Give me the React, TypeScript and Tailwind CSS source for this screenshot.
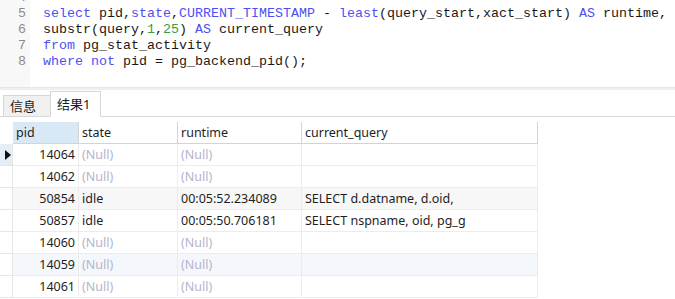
import React from "react";

const K = ({ c }: { c: string }) => <span className="text-[#4f4ff0]">{c}</span>;
const N = ({ c }: { c: string }) => <span className="text-[#3f9a3f]">{c}</span>;

const lines: { n: number; body: React.ReactNode }[] = [
  { n: 4, body: <span>&nbsp;</span> },
  {
    n: 5,
    body: (
      <>
        <K c="select" /> pid,<K c="state" />,<K c="CURRENT_TIMESTAMP" /> - <K c="least" />(query_start,xact_start) <K c="AS" /> runtime,
      </>
    ),
  },
  {
    n: 6,
    body: (
      <>
        substr(query,<N c="1" />,<N c="25" />) <K c="AS" /> current_query
      </>
    ),
  },
  {
    n: 7,
    body: (
      <>
        <K c="from" /> pg_stat_activity
      </>
    ),
  },
  {
    n: 8,
    body: (
      <>
        <K c="where" /> <K c="not" /> pid = pg_backend_pid();
      </>
    ),
  },
];

type Row = { pid: string; state: string | null; runtime: string | null; q: string; bg: string };
const rows: Row[] = [
  { pid: "14064", state: null, runtime: null, q: "", bg: "bg-white" },
  { pid: "14062", state: null, runtime: null, q: "", bg: "bg-white" },
  { pid: "50854", state: "idle", runtime: "00:05:52.234089", q: "SELECT d.datname, d.oid,", bg: "bg-[#f7f7f7]" },
  { pid: "50857", state: "idle", runtime: "00:05:50.706181", q: "SELECT nspname, oid, pg_g", bg: "bg-white" },
  { pid: "14060", state: null, runtime: null, q: "", bg: "bg-white" },
  { pid: "14059", state: null, runtime: null, q: "", bg: "bg-[#f4f8fc]" },
  { pid: "14061", state: null, runtime: null, q: "", bg: "bg-white" },
];

const Null = () => <span className="text-[#b4b4cc]">(Null)</span>;

export default function App() {
  return (
    <div className="w-[675px] h-[299px] overflow-hidden bg-white">
      {/* editor */}
      <div className="h-[88px] overflow-hidden flex border-b border-[#e6e6e6]">
        <div className="w-[30px] bg-[#f8f8f8] flex flex-col -mt-[10px]">
          {lines.map((l) => (
            <div
              key={l.n}
              className="h-[16px] leading-[16px] text-right pr-[4px] text-[#8c8c8c] text-[13.33px]"
              style={{ fontFamily: '"Liberation Mono", monospace' }}
            >
              {l.n}
            </div>
          ))}
        </div>
        <div className="flex-1 flex flex-col -mt-[10px] pl-[13px]">
          {lines.map((l) => (
            <div
              key={l.n}
              className="h-[16px] leading-[16px] whitespace-pre text-[13.33px] text-[#1a1a1a]"
              style={{ fontFamily: '"Liberation Mono", monospace' }}
            >
              {l.body}
            </div>
          ))}
        </div>
      </div>
      {/* splitter */}
      <div className="h-[2px] bg-[#efefef]" />
      {/* tabs */}
      <div
        className="h-[27px] flex items-end pl-[3px] border-b border-[#d6d6d6] bg-white"
        style={{ fontFamily: '"Noto Sans", "Noto Sans CJK SC", sans-serif' }}
      >
        <div className="h-[22px] w-[47px] -mb-px bg-[#f0f0f0] border border-[#d6d6d6] border-r-0 text-[13px] leading-[21px] pl-[6px] text-[#1a1a1a]">
          信息
        </div>
        <div className="h-[26px] w-[51px] -mb-px bg-white border border-[#d6d6d6] border-b-white text-[13px] leading-[24px] pl-[6px] text-[#1a1a1a]">
          结果1
        </div>
      </div>
      <div className="h-[5px]" />
      {/* grid */}
      <div
        className="text-[12.5px] text-[#1e1e1e]"
        style={{ fontFamily: '"Noto Sans", "Noto Sans CJK SC", sans-serif' }}
      >
        <div className="grid grid-cols-[13px_66px_99px_124px_236px] h-[22px]">
          <div className="bg-white" />
          <div className="bg-[#d9e8f6] border-r border-b border-[#d4d4d4] pl-[3px] leading-[21px]">pid</div>
          <div className="border-r border-b border-[#d4d4d4] pl-[3px] leading-[21px]">state</div>
          <div className="border-r border-b border-[#d4d4d4] pl-[3px] leading-[21px]">runtime</div>
          <div className="border-r border-b border-[#d4d4d4] pl-[3px] leading-[21px]">current_query</div>
        </div>
        {rows.map((r, i) => (
          <div key={r.pid} className="grid grid-cols-[13px_66px_99px_124px_236px] h-[22px]">
            <div
              className={`border-r border-b border-[#e6e6e6] flex items-center pl-[5px] ${
                i === 0 ? "bg-[#e3eef9]" : "bg-white"
              }`}
            >
              {i === 0 && (
                <svg width="6" height="10" viewBox="0 0 6 10">
                  <path d="M0 0 L6 5 L0 10 Z" fill="#111" />
                </svg>
              )}
            </div>
            <div className={`${r.bg} border-r border-b border-[#ececec] text-right pr-[3px] leading-[21px]`}>{r.pid}</div>
            <div className={`${r.bg} border-r border-b border-[#ececec] pl-[3px] leading-[21px]`}>
              {r.state ?? <Null />}
            </div>
            <div className={`${r.bg} border-r border-b border-[#ececec] pl-[3px] leading-[21px]`}>
              {r.runtime ?? <Null />}
            </div>
            <div className={`${r.bg} border-r border-b border-[#ececec] pl-[3px] leading-[21px] whitespace-nowrap overflow-hidden`}>
              {r.q}
            </div>
          </div>
        ))}
      </div>
    </div>
  );
}
